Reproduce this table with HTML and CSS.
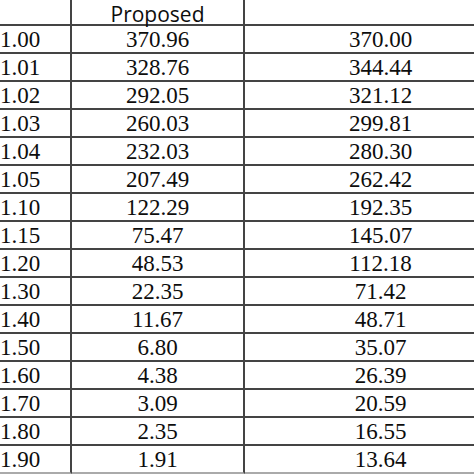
FILE: index.html
```html
<!DOCTYPE html>
<html>
<head>
<meta charset="utf-8">
<link rel="stylesheet" href="styles.css">
</head>
<body>
<div class="grid">
  <div class="cell c1 head"></div><div class="cell c2 head">Proposed</div><div class="cell c3 head"></div>
  <div class="cell c1">1.00</div><div class="cell c2">370.96</div><div class="cell c3">370.00</div>
  <div class="cell c1">1.01</div><div class="cell c2">328.76</div><div class="cell c3">344.44</div>
  <div class="cell c1">1.02</div><div class="cell c2">292.05</div><div class="cell c3">321.12</div>
  <div class="cell c1">1.03</div><div class="cell c2">260.03</div><div class="cell c3">299.81</div>
  <div class="cell c1">1.04</div><div class="cell c2">232.03</div><div class="cell c3">280.30</div>
  <div class="cell c1">1.05</div><div class="cell c2">207.49</div><div class="cell c3">262.42</div>
  <div class="cell c1">1.10</div><div class="cell c2">122.29</div><div class="cell c3">192.35</div>
  <div class="cell c1">1.15</div><div class="cell c2">75.47</div><div class="cell c3">145.07</div>
  <div class="cell c1">1.20</div><div class="cell c2">48.53</div><div class="cell c3">112.18</div>
  <div class="cell c1">1.30</div><div class="cell c2">22.35</div><div class="cell c3">71.42</div>
  <div class="cell c1">1.40</div><div class="cell c2">11.67</div><div class="cell c3">48.71</div>
  <div class="cell c1">1.50</div><div class="cell c2">6.80</div><div class="cell c3">35.07</div>
  <div class="cell c1">1.60</div><div class="cell c2">4.38</div><div class="cell c3">26.39</div>
  <div class="cell c1">1.70</div><div class="cell c2">3.09</div><div class="cell c3">20.59</div>
  <div class="cell c1">1.80</div><div class="cell c2">2.35</div><div class="cell c3">16.55</div>
  <div class="cell c1 last">1.90</div><div class="cell c2 last">1.91</div><div class="cell c3 last">13.64</div>
</div>
</body>
</html>
```
FILE: styles.css
```css
html, body {
  margin: 0;
  padding: 0;
  background: #fff;
  overflow: hidden;
}
.grid {
  display: grid;
  grid-template-columns: 72px 173px 229px;
  grid-template-rows: 26px;
  grid-auto-rows: 28px;
  width: 474px;
  font-family: "Liberation Serif", "Times New Roman", serif;
  font-size: 23px;
  color: #0d0d0d;
}
.cell {
  box-sizing: border-box;
  border-bottom: 2px solid #444;
  display: flex;
  align-items: center;
  justify-content: center;
  line-height: 1;
  white-space: nowrap;
}
.c1 {
  justify-content: flex-start;
  border-right: 2px solid #444;
}
.c2 {
  border-right: 2px solid #444;
}
.c3 {
  padding-left: 42px;
}
.head {
  font-family: "Open Sans", "Noto Sans", sans-serif;
  font-size: 21px;
  padding-top: 3px;
  line-height: 22px;
}
.last {
  border-bottom-color: #aaa;
}
```
